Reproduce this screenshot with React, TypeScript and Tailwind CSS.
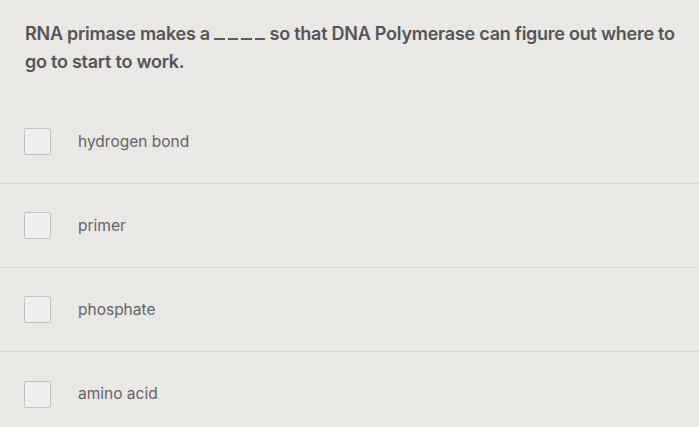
import React from "react";

const options = ["hydrogen bond", "primer", "phosphate", "amino acid"];

export default function App() {
  return (
    <div
      className="w-[699px] h-[427px] overflow-hidden bg-[#e9e8e5]"
      style={{ fontFamily: "Inter, 'Noto Sans', sans-serif" }}
    >
      <div className="pl-[25px] pr-[8px] pt-[20px] text-[18px] leading-[28px] font-semibold tracking-[-0.25px] text-[#555457]">
        RNA primase makes a{" "}
        <span className="inline-flex w-[51px] gap-[3px] align-baseline">
          <span className="h-[2px] flex-1 bg-[#5a595c]" />
          <span className="h-[2px] flex-1 bg-[#5a595c]" />
          <span className="h-[2px] flex-1 bg-[#5a595c]" />
          <span className="h-[2px] flex-1 bg-[#5a595c]" />
        </span>{" "}
        so that DNA Polymerase can figure out where to go to start to work.
      </div>
      <div className="mt-[24px] flex flex-col">
        {options.map((o, i) => (
          <div
            key={o}
            className={
              "h-[84px] flex items-center pl-[24px] " +
              (i < options.length - 1 ? "border-b border-[#d6d5d3]" : "")
            }
          >
            <div className="w-[27px] h-[27px] border-[1.5px] border-[#c2c1bf] rounded-[2px] bg-[#f0efed]" />
            <span className="ml-[27px] text-[15.5px] text-[#646366]">{o}</span>
          </div>
        ))}
      </div>
    </div>
  );
}
